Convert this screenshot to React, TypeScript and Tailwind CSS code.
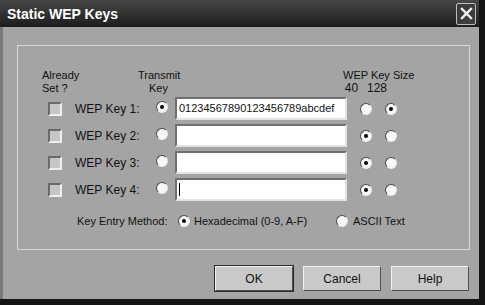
import React from 'react';

const font = { fontFamily: '"Liberation Sans", Arial, sans-serif' };

const Radio: React.FC<{ checked?: boolean; className?: string }> = ({ checked, className = '' }) => (
  <span
    className={`relative inline-flex w-[12px] h-[12px] shrink-0 rounded-full bg-[#f7f7f7] border-[1.5px] border-t-[#4a4a4a] border-l-[#4a4a4a] border-b-[#e8e8e8] border-r-[#e8e8e8] items-center justify-center ${className}`}
  >
    {checked && <span className="w-[4px] h-[4px] rounded-full bg-black" />}
  </span>
);

const Check: React.FC = () => (
  <span className="inline-block w-[14px] h-[14px] shrink-0 bg-[#c6c6c6] border-2 border-t-[#6a6a6a] border-l-[#6a6a6a] border-b-[#efefef] border-r-[#efefef]" />
);

const rows = [
  { label: 'WEP Key 1:', value: '01234567890123456789abcdef', transmit: true, size: 128 },
  { label: 'WEP Key 2:', value: '', transmit: false, size: 40 },
  { label: 'WEP Key 3:', value: '', transmit: false, size: 40 },
  { label: 'WEP Key 4:', value: '', transmit: false, size: 40, cursor: true },
];

const Button: React.FC<{ label: string; primary?: boolean }> = ({ label, primary }) => (
  <div
    className={`w-[78px] h-[25px] flex items-center justify-center text-[12px] text-[#111] bg-[#c9c9c9] ${
      primary ? 'outline outline-1 outline-[#2a2a2a]' : ''
    } border-[1.5px] border-t-[#f2f2f2] border-l-[#f2f2f2] border-b-[#4e4e4e] border-r-[#4e4e4e]`}
  >
    {label}
  </div>
);

export default function App() {
  return (
    <div className="w-[485px] h-[305px] bg-[#141414] overflow-hidden" style={font}>
      <div className="w-[479px] h-[299px] flex flex-col">
        {/* title bar */}
        <div className="h-[27px] shrink-0 flex items-center justify-between pl-[7px] pr-[3px] bg-gradient-to-b from-[#474747] to-[#1d1d1d]">
          <span className="text-white font-bold text-[14px] leading-none">Static WEP Keys</span>
          <div className="w-[20px] h-[22px] rounded-[2px] border border-[#bdbdbd] bg-[#3d3d3d] flex items-center justify-center">
            <svg width="13" height="13" viewBox="0 0 13 13">
              <path d="M2 2 L11 11 M11 2 L2 11" stroke="#f4f4f4" strokeWidth="2.4" strokeLinecap="square" />
            </svg>
          </div>
        </div>

        {/* body */}
        <div className="flex-1 flex flex-col bg-[#a4a4a4] border-l-[3px] border-[#7a7a7a] pl-[14px] pt-[18px] text-[11px] text-[#111]">
          <div className="w-[453px] h-[205px] border border-[#d9d9d9] flex flex-col">
            {/* headers */}
            <div className="flex pl-[24px] pt-[23px] leading-[13px]">
              <div className="w-[96px]">
                <div>Already</div>
                <div>Set ?</div>
              </div>
              <div className="w-[41px] text-center">
                <div>Transmit</div>
                <div>Key</div>
              </div>
              <div className="ml-[163px] flex flex-col items-start">
                <div className="ml-[1px]">WEP Key Size</div>
                <div className="flex">
                  <span className="w-[19px] text-center text-[12px] leading-[13px]">40</span>
                  <span className="ml-[6px] w-[20px] text-center text-[12px] leading-[13px]">128</span>
                </div>
              </div>
            </div>

            {/* key rows */}
            <div className="flex flex-col gap-[4px] mt-[2px]">
              {rows.map((r) => (
                <div key={r.label} className="flex items-center h-[23px] pl-[30px]">
                  <Check />
                  <span className="ml-[13px] w-[81px] text-[12px]">{r.label}</span>
                  <Radio checked={r.transmit} className="-mt-[3px]" />
                  <div className="ml-[7px] w-[172px] h-[23px] bg-white border-2 border-t-[#6f6f6f] border-l-[#6f6f6f] border-b-[#e2e2e2] border-r-[#e2e2e2] flex items-center pl-[2px] text-[11px]">
                    {r.cursor && <span className="w-[1px] h-[13px] bg-black" />}
                    {r.value}
                  </div>
                  <Radio checked={r.size === 40} className="ml-[13px]" />
                  <Radio checked={r.size === 128} className="ml-[13px]" />
                </div>
              ))}
            </div>

            {/* entry method */}
            <div className="flex items-center mt-[13px] pl-[59px] h-[14px]">
              <span className="w-[101px]">Key Entry Method:</span>
              <Radio checked />
              <span className="ml-[4px] w-[142px]">Hexadecimal (0-9, A-F)</span>
              <Radio />
              <span className="ml-[5px]">ASCII Text</span>
            </div>
          </div>

          {/* buttons */}
          <div className="flex justify-end gap-[10px] w-[452px] mt-[16px]">
            <Button label="OK" primary />
            <Button label="Cancel" />
            <Button label="Help" />
          </div>
        </div>
      </div>
    </div>
  );
}
